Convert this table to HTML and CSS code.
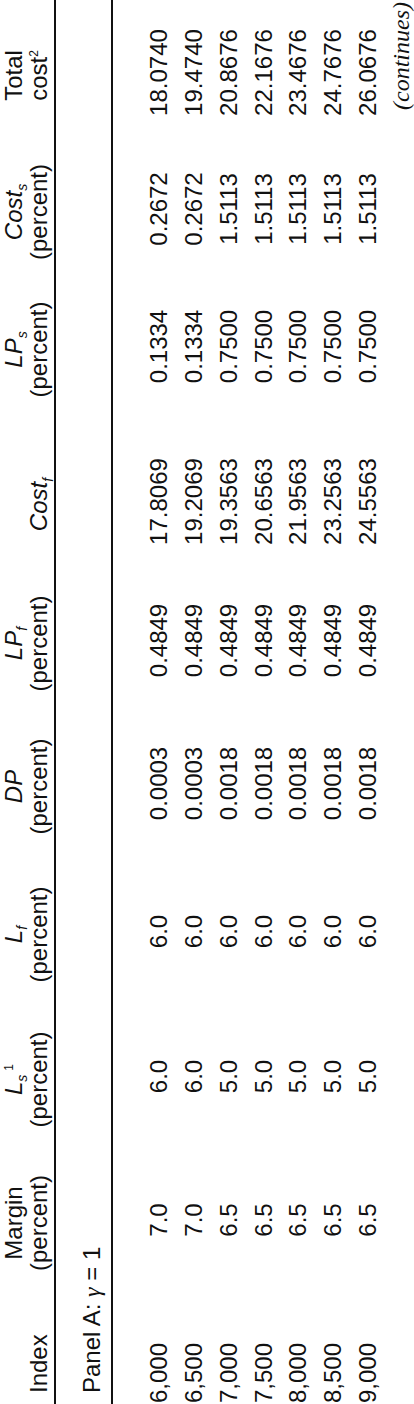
FILE: index.html
```html
<!DOCTYPE html>
<html lang="en">
<head>
<meta charset="utf-8">
<title>Table</title>
<link rel="stylesheet" href="styles.css">
</head>
<body>
<div class="page">
  <div class="sheet">
    <div class="row head">
      <div class="hc hc-index"><span>Index</span></div>
      <div class="hc"><span>Margin</span><span>(percent)</span></div>
      <div class="hc"><span><i>L</i><sub>s</sub><sup class="one">1</sup></span><span>(percent)</span></div>
      <div class="hc"><span><i>L</i><sub>f</sub></span><span>(percent)</span></div>
      <div class="hc"><span><i>DP</i></span><span>(percent)</span></div>
      <div class="hc"><span><i>LP</i><sub>f</sub></span><span>(percent)</span></div>
      <div class="hc"><span><i>Cost</i><sub class="low">f</sub></span></div>
      <div class="hc"><span><i>LP</i><sub>s</sub></span><span>(percent)</span></div>
      <div class="hc"><span><i>Cost</i><sub>s</sub></span><span>(percent)</span></div>
      <div class="hc"><span>Total</span><span>cost<sup class="two">2</sup></span></div>
    </div>
    <div class="panel">Panel A: <i class="gamma">γ</i> = 1</div>
    <div class="row body">
      <div class="idx">6,000</div><div>7.0</div><div>6.0</div><div>6.0</div><div>0.0003</div><div>0.4849</div><div>17.8069</div><div>0.1334</div><div>0.2672</div><div>18.0740</div>
      <div class="idx">6,500</div><div>7.0</div><div>6.0</div><div>6.0</div><div>0.0003</div><div>0.4849</div><div>19.2069</div><div>0.1334</div><div>0.2672</div><div>19.4740</div>
      <div class="idx">7,000</div><div>6.5</div><div>5.0</div><div>6.0</div><div>0.0018</div><div>0.4849</div><div>19.3563</div><div>0.7500</div><div>1.5113</div><div>20.8676</div>
      <div class="idx">7,500</div><div>6.5</div><div>5.0</div><div>6.0</div><div>0.0018</div><div>0.4849</div><div>20.6563</div><div>0.7500</div><div>1.5113</div><div>22.1676</div>
      <div class="idx">8,000</div><div>6.5</div><div>5.0</div><div>6.0</div><div>0.0018</div><div>0.4849</div><div>21.9563</div><div>0.7500</div><div>1.5113</div><div>23.4676</div>
      <div class="idx">8,500</div><div>6.5</div><div>5.0</div><div>6.0</div><div>0.0018</div><div>0.4849</div><div>23.2563</div><div>0.7500</div><div>1.5113</div><div>24.7676</div>
      <div class="idx">9,000</div><div>6.5</div><div>5.0</div><div>6.0</div><div>0.0018</div><div>0.4849</div><div>24.5563</div><div>0.7500</div><div>1.5113</div><div>26.0676</div>
    </div>
    <div class="continues">(continues)</div>
  </div>
</div>
</body>
</html>
```

FILE: styles.css
```css
html, body {
  margin: 0;
  padding: 0;
  background: #fff;
}

.page {
  width: 414px;
  height: 1404px;
  overflow: hidden;
}

.sheet {
  width: 1404px;
  height: 414px;
  transform-origin: 0 0;
  transform: translateY(1404px) rotate(-90deg);
  font-family: "Liberation Sans", Arial, sans-serif;
  font-size: 24px;
  color: #111;
}

.row {
  display: grid;
  grid-template-columns: 114px 140px 147px 143px 153px 133px 145px 165px 110px 163px;
  width: 1413px;
}

.head {
  height: 54px;
  border-bottom: 2px solid #111;
}

.hc {
  box-sizing: border-box;
  height: 54px;
  padding-bottom: 5px;
  display: flex;
  flex-direction: column;
  justify-content: flex-end;
  align-items: center;
  gap: 2px;
  padding-right: 6px;
  white-space: nowrap;
}

.hc > span {
  line-height: 27px;
}

.hc > span:last-child {
  line-height: 20px;
}

.hc-index {
  align-items: flex-start;
  padding-left: 11px;
  padding-right: 0;
}

.hc i {
  font-style: italic;
}

sub, sup {
  line-height: 0;
  font-style: italic;
}

sub {
  font-size: 14px;
  vertical-align: -5px;
}

sub.low {
  vertical-align: -6px;
}

sup.two {
  font-size: 12px;
  font-style: normal;
  vertical-align: 9px;
}

sup.one {
  font-size: 12px;
  font-style: normal;
  vertical-align: 9px;
  margin-left: 4px;
}

.panel {
  height: 34px;
  padding-top: 21px;
  padding-left: 11px;
  line-height: 29px;
  border-bottom: 2px solid #111;
  width: 1413px;
  box-sizing: content-box;
}

.gamma {
  font-family: "Liberation Serif", "Times New Roman", serif;
  font-style: italic;
}

.body {
  padding-top: 29.3px;
  line-height: 34.8px;
  text-align: center;
}

.body .idx {
  text-align: right;
  padding-right: 53px;
}

.continues {
  width: 1402px;
  margin-top: 3.5px;
  text-align: right;
  font-family: "Liberation Serif", "Times New Roman", serif;
  font-style: italic;
  font-size: 24px;
  line-height: 24px;
}
```
